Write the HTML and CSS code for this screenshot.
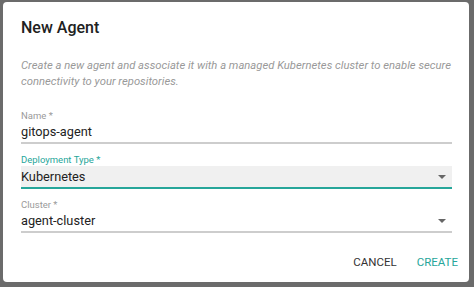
FILE: index.html
```html
<!DOCTYPE html>
<html lang="en">
<head>
  <meta charset="UTF-8">
  <meta name="viewport" content="width=device-width, initial-scale=1.0">
  <title>New Agent</title>
  <link rel="stylesheet" href="styles.css">
</head>
<body>
  <div class="dialog">
    <h1>New Agent</h1>
    <p class="intro">Create a new agent and associate it with a managed Kubernetes cluster to enable secure connectivity to your repositories.</p>

    <div class="field">
      <label>Name *</label>
      <div class="value">gitops-agent</div>
    </div>

    <div class="field active">
      <label>Deployment Type *</label>
      <div class="value">Kubernetes <span class="arrow"></span></div>
    </div>

    <div class="field">
      <label>Cluster *</label>
      <div class="value">agent-cluster <span class="arrow"></span></div>
    </div>

    <div class="actions">
      <button class="cancel">Cancel</button>
      <button class="create">Create</button>
    </div>
  </div>
</body>
</html>
```

FILE: styles.css
```css
body {
  font-family: Roboto, "Noto Sans", Arial, sans-serif;
  background-color: #6b6b6b;
  margin: 0;
  padding: 2px 0 0 3px;
}
.dialog {
  width: 466px;
  height: 280px;
  box-sizing: border-box;
  background-color: #fff;
  border-radius: 4px;
  padding: 14px 17px 0 18px;
}
h1 {
  margin: 0;
  font-size: 16px;
  font-weight: 500;
  line-height: 24px;
  color: #212121;
}
.intro {
  margin: 18px 0 19px;
  font-size: 11.25px;
  line-height: 16px;
  font-style: italic;
  color: #999;
}
.field {
  margin-bottom: 9px;
}
.field label {
  display: block;
  font-size: 9.5px;
  line-height: 13px;
  color: #9a9a9a;
}
.field .value {
  display: flex;
  justify-content: space-between;
  align-items: center;
  font-size: 12.75px;
  line-height: 20px;
  color: #222;
  border-bottom: 2px solid #cdcdcd;
}
.field.active label {
  color: #26a69a;
}
.field.active .value {
  background-color: #f0f0f0;
  line-height: 21px;
  border-bottom-color: #26a69a;
}
.arrow {
  width: 0;
  height: 0;
  margin-right: 6px;
  border-left: 4px solid transparent;
  border-right: 4px solid transparent;
  border-top: 4px solid #666;
}
.actions {
  display: flex;
  justify-content: flex-end;
  gap: 20px;
  margin-top: 21px;
  margin-right: -6px;
}
.actions button {
  background: none;
  border: none;
  padding: 0;
  font-family: inherit;
  font-size: 11.5px;
  line-height: 16px;
  text-transform: uppercase;
  cursor: pointer;
}
.cancel {
  color: #333;
}
.create {
  color: #26a69a;
}
```
